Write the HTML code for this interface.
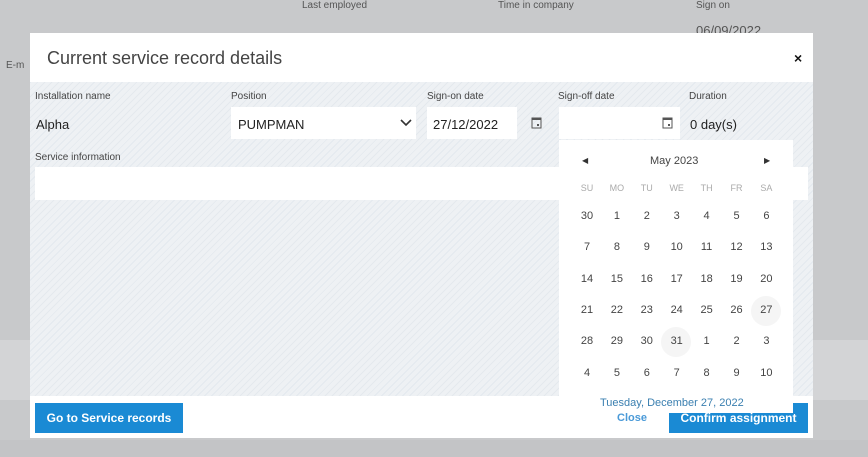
<!DOCTYPE html>
<html><head><style>
*{box-sizing:border-box;margin:0;padding:0}
body{width:868px;height:457px;overflow:hidden;background:#c8c9cb;font-family:"Liberation Sans",sans-serif;position:relative;color:#333}
.a{position:absolute}
.bg1{left:0;top:340px;width:868px;height:60px;background:#d3d4d6}
.bg2{left:0;top:440px;width:868px;height:17px;background:#c3c4c6}
.modal{left:30px;top:33px;width:783px;height:405px;background:#fff}
.body{left:30px;top:82px;width:783px;height:314px;background:#eef1f4 repeating-linear-gradient(135deg,#e4e9ee 0 1px,transparent 1px 5px)}
.lbl{font-size:10px;color:#444}
.in{background:#fff;height:32px}
.v{font-size:13px;color:#222}
.cal{left:559px;top:140px;width:234px;height:273px;background:#fff}
.d{position:absolute;width:30px;text-align:center;font-size:11px;color:#444}
.h{font-size:9px;color:#aaa}
.btn{background:#1a8ad4;color:#fff;font-weight:bold;font-size:12px;text-align:center;line-height:30px}
</style></head><body>
<div class="a bg1"></div><div class="a bg2"></div>
<div class="a" style="left:302px;top:0;font-size:10px;color:#555">Last employed</div>
<div class="a" style="left:498px;top:0;font-size:10px;color:#555">Time in company</div>
<div class="a" style="left:696px;top:0;font-size:10px;color:#555">Sign on</div>
<div class="a" style="left:696px;top:23px;font-size:13px;color:#555">06/09/2022</div>
<div class="a" style="left:6px;top:60px;font-size:10px;color:#555">E-m</div>
<div class="a modal"></div>
<div class="a" style="left:47px;top:48px;font-size:18px;color:#444">Current service record details</div>
<div class="a" style="left:794px;top:50px;font-size:14px;font-weight:bold;color:#111">×</div>
<div class="a body"></div>
<div class="a lbl" style="left:35px;top:91px">Installation name</div>
<div class="a lbl" style="left:231px;top:91px">Position</div>
<div class="a lbl" style="left:427px;top:91px">Sign-on date</div>
<div class="a lbl" style="left:558px;top:91px">Sign-off date</div>
<div class="a lbl" style="left:689px;top:91px">Duration</div>
<div class="a v" style="left:36px;top:117px">Alpha</div>
<div class="a in" style="left:231px;top:107px;width:185px"></div>
<div class="a v" style="left:238px;top:117px">PUMPMAN</div>
<svg class="a" style="left:400px;top:118px" width="12" height="10"><path d="M1 2l5 5 5-5" stroke="#333" stroke-width="1.6" fill="none"/></svg>
<div class="a in" style="left:427px;top:107px;width:90px"></div>
<div class="a v" style="left:433px;top:117px">27/12/2022</div>
<div class="a in" style="left:559px;top:107px;width:121px"></div>
<svg class="a" style="left:531px;top:116px" width="11" height="13"><rect x="1" y="2" width="9" height="10" fill="none" stroke="#555"/><rect x="1" y="2" width="9" height="2" fill="#555"/><rect x="6" y="8" width="2" height="2" fill="#555"/></svg>
<svg class="a" style="left:662px;top:116px" width="11" height="13"><rect x="1" y="2" width="9" height="10" fill="none" stroke="#555"/><rect x="1" y="2" width="9" height="2" fill="#555"/><rect x="6" y="8" width="2" height="2" fill="#555"/></svg>
<div class="a v" style="left:690px;top:117px">0 day(s)</div>
<div class="a lbl" style="left:35px;top:152px">Service information</div>
<div class="a in" style="left:35px;top:167px;width:773px;height:33px"></div>
<div class="a btn" style="left:35px;top:403px;width:148px">Go to Service records</div>
<div class="a" style="left:617px;top:412px;font-size:11px;color:#4a9ad8;font-weight:bold">Close</div>
<div class="a btn" style="left:669px;top:403px;width:139px;height:30px">Confirm assignment</div>
<div class="a cal"></div>
<div class="a" style="left:582px;top:156px;font-size:8px;color:#333">◀</div>
<div class="a" style="left:764px;top:156px;font-size:8px;color:#333">▶</div>
<div class="a" style="left:650px;top:155px;font-size:11px;color:#444">May 2023</div>
<div class="a" style="left:751px;top:296px;width:30px;height:30px;border-radius:50%;background:#f5f5f5"></div>
<div class="a" style="left:661px;top:327px;width:30px;height:30px;border-radius:50%;background:#f5f5f5"></div>
<div id="g"></div>
<div class="a" style="left:600px;top:397px;font-size:11px;color:#3a7fb0">Tuesday, December 27, 2022</div>
<script>
var h=["SU","MO","TU","WE","TH","FR","SA"],r=[[30,1,2,3,4,5,6],[7,8,9,10,11,12,13],[14,15,16,17,18,19,20],[21,22,23,24,25,26,27],[28,29,30,31,1,2,3],[4,5,6,7,8,9,10]],s="";
for(var i=0;i<7;i++){var x=572+i*29.9;s+='<div class="d h" style="left:'+x+'px;top:183px">'+h[i]+'</div>';for(var j=0;j<6;j++)s+='<div class="d" style="left:'+x+'px;top:'+(210+j*31.3)+'px">'+r[j][i]+'</div>';}
document.getElementById("g").innerHTML=s;
</script>
</body></html>
